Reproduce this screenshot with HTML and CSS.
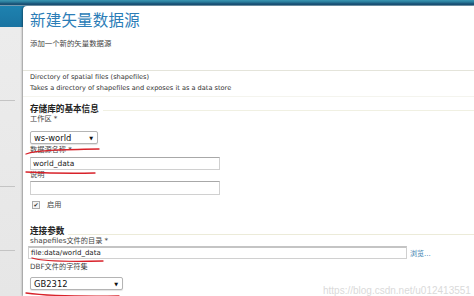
FILE: index.html
```html
<!DOCTYPE html>
<html>
<head>
  <title>新建矢量数据源</title>
  <link rel="stylesheet" href="styles.css">
</head>
<body>
  <div class="topbar"></div>
  <div class="layout">
    <div class="sidebar">
      <div class="nav-group g1"></div>
      <div class="nav-group g2"></div>
      <div class="nav-group g3"></div>
    </div>

    <div class="panel">
      <div class="page-head">
        <h1>新建矢量数据源</h1>
        <p class="subtitle">添加一个新的矢量数据源</p>
      </div>

      <div class="store-desc">
        <p>Directory of spatial files (shapefiles)</p>
        <p>Takes a directory of shapefiles and exposes it as a data store</p>
      </div>

      <div class="section">
        <div class="legend"><span>存储库的基本信息</span><i></i></div>
        <label class="label">工作区 *</label>
        <div class="field">
          <div class="select ws">ws-world<span class="arrow">&#9660;</span></div>
          <svg class="scribble s1" width="76" height="7" viewBox="0 0 76 7">
            <path d="M1 6 C 12 2, 40 1.5, 74 1" />
          </svg>
        </div>

        <label class="label">数据源名称 *</label>
        <div class="field">
          <div class="input wide">world_data</div>
          <svg class="scribble s2" width="72" height="5" viewBox="0 0 72 5">
            <path d="M1 2 C 20 3, 50 3.5, 70 3" />
          </svg>
        </div>

        <label class="label">说明</label>
        <div class="input wide tall"></div>

        <div class="check-row">
          <span class="checkbox">&#10004;</span>
          <span>启用</span>
        </div>
      </div>

      <div class="section params">
        <div class="legend"><span>连接参数</span><i></i></div>
        <label class="label">shapefiles文件的目录 *</label>
        <div class="field path-row">
          <div class="input path">file:data/world_data</div>
          <a class="browse">浏览...</a>
          <svg class="scribble s3" width="74" height="6" viewBox="0 0 74 6">
            <path d="M1 1 C 10 4, 30 5, 72 4" />
          </svg>
        </div>

        <label class="label dbf">DBF文件的字符集</label>
        <div class="field">
          <div class="select gb">GB2312<span class="arrow">&#9660;</span></div>
          <svg class="scribble s4" width="96" height="6" viewBox="0 0 96 6">
            <path d="M1 1 C 20 3.5, 60 4.5, 94 4" />
          </svg>
        </div>
      </div>

      <div class="watermark">https://blog.csdn.net/u012413551</div>
    </div>
  </div>
</body>
</html>
```

FILE: styles.css
```css
body {
  margin: 0;
  height: 296px;
  overflow: hidden;
  font-family: "DejaVu Sans", "Noto Sans CJK SC", sans-serif;
  color: #333;
  background: linear-gradient(to bottom, #1f86b4 0, #1a74a2 27px, #ececec 27px, #e6e6e6 100%);
}
.topbar {
  height: 6px;
  background: linear-gradient(to bottom, #3a96b2 0, #2a7c9c 2px, #184d72 4px, #1c5579 5px, #cfe0e6 6px);
}
.layout {
  display: flex;
  height: 290px;
}
.sidebar {
  width: 23px;
  flex: none;
  padding-top: 94px;
}
.nav-group {
  width: 15px;
  border-top: 1px solid #c4c4c4;
}
.nav-group.g1 { height: 85px; }
.nav-group.g2 { height: 63px; }
.nav-group.g3 { height: 30px; }

.panel {
  flex: 1;
  position: relative;
  background: #fff;
  border-radius: 4px 0 0 0;
  box-shadow: -1px 0 2px rgba(0,0,0,0.35);
  padding-left: 7px;
}
.page-head {
  height: 64px;
  border-bottom: 1px solid #e4e4da;
  margin-left: -7px;
  padding-left: 7px;
}
h1 {
  margin: 0;
  padding-top: 6px;
  font-size: 15.5px;
  line-height: 18px;
  font-weight: normal;
  color: #2b7db7;
  letter-spacing: 0.2px;
}
.subtitle {
  margin: 9px 0 0;
  font-size: 7.4px;
  line-height: 10px;
  color: #444;
}
.store-desc {
  padding-top: 1px;
  height: 24px;
  border-bottom: 1px solid #f4f4ee;
  margin-left: -7px;
  padding-left: 7px;
}
.store-desc p {
  margin: 0;
  font-size: 6.6px;
  line-height: 11px;
  color: #333;
}
.section {
  padding-top: 5px;
}
.legend {
  display: flex;
  align-items: center;
  height: 12px;
  font-size: 8.6px;
  font-weight: bold;
  color: #222;
}
.legend i {
  flex: 1;
  height: 1px;
  margin: 5px 0 0 4px;
  background: #f0f0e2;
}
.label {
  display: block;
  font-size: 7.2px;
  line-height: 10px;
  color: #444;
}
.field {
  position: relative;
}
.select {
  position: relative;
  box-sizing: border-box;
  height: 13px;
  margin: 7px 0 1px;
  border: 1px solid #b4b4b4;
  border-radius: 2px;
  background: #fff;
  box-shadow: 0 1px 1px rgba(0,0,0,0.12);
  font-size: 8.4px;
  line-height: 12px;
  padding-left: 3px;
  color: #111;
}
.select .arrow {
  position: absolute;
  right: 4px;
  top: 0;
  font-size: 5px;
  color: #111;
}
.select.ws { width: 68px; }
.select.gb { width: 93px; margin-top: 5px; }
.input {
  box-sizing: border-box;
  height: 13px;
  border: 1px solid #d0d0d0;
  border-top-color: #a8a8a8;
  font-size: 7.5px;
  line-height: 11px;
  padding-left: 2px;
  color: #222;
  background: #fff;
}
.input.wide {
  width: 190px;
  margin-top: 2px;
}
.input.tall {
  height: 14px;
  margin-top: 1px;
}
.check-row {
  display: flex;
  align-items: center;
  gap: 7px;
  margin-top: 5px;
  padding-left: 2px;
  font-size: 7.2px;
  line-height: 10px;
  color: #444;
}
.checkbox {
  width: 6px;
  height: 6px;
  border: 1px solid #aaa;
  font-size: 6px;
  line-height: 6px;
  text-align: center;
  color: #333;
  background: #f4f4f4;
}
.params {
  padding-top: 14px;
}
.params .legend i {
  background: #ecebd9;
  margin-top: 8px;
}
.path-row {
  display: flex;
  align-items: center;
}
.input.path {
  width: 379px;
  border-top: 2px solid #c4c4c4;
  margin-left: -2px;
  font-size: 7px;
}
.browse {
  margin-left: 3px;
  font-size: 7px;
  color: #3b7fb0;
}
.label.dbf {
  margin-top: 3px;
}
.scribble {
  position: absolute;
  left: -5px;
  overflow: visible;
}
.scribble path {
  fill: none;
  stroke: #d8222a;
  stroke-width: 1.3;
  stroke-linecap: round;
}
.s1 { top: 17px; }
.s2 { top: 13px; }
.s3 { top: 11px; left: 1px; }
.s4 { top: 15px; }
.watermark {
  position: absolute;
  left: 300px;
  top: 279px;
  font-family: "Liberation Sans", sans-serif;
  font-size: 10px;
  color: #dadada;
}
```
